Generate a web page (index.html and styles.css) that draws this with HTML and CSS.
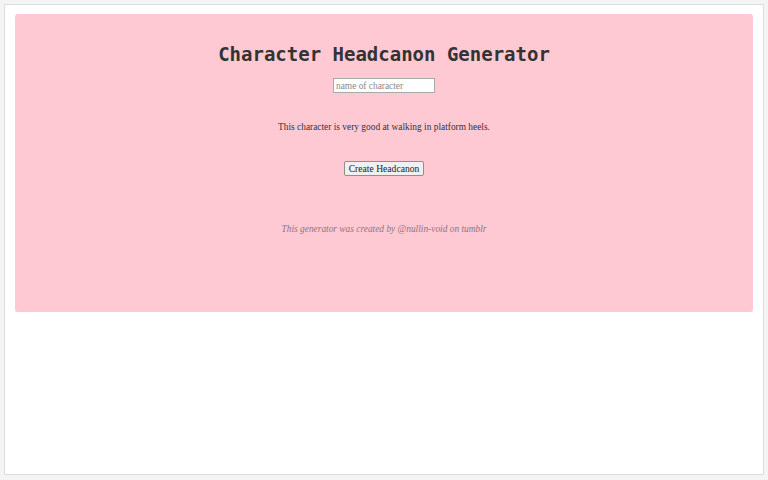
FILE: index.html
```html
<!DOCTYPE html>
<html lang="en">
  <head>
    <meta charset="UTF-8" />
    <meta name="viewport" content="width=device-width, initial-scale=1.0" />
    <title>Character Headcanon Generator</title>
    <link rel="stylesheet" href="styles.css">
  </head>
  <body>
    <main class="frame">
      <section class="generator">
        <h1 class="generator__title">Character Headcanon Generator</h1>
        <input class="generator__name" type="text" placeholder="name of character" />
        <p class="generator__result">This character is very good at walking in platform heels.</p>
        <button class="generator__button" type="button">Create Headcanon</button>
        <p class="generator__credit">This generator was created by @nullin-void on tumblr</p>
      </section>
    </main>
  </body>
</html>
```

FILE: styles.css
```css
:root {
  --pink: #ffc9d3;
  --ink: #333;
  --credit: #8c7583;
}
*,
*::before,
*::after {
  box-sizing: border-box;
}
body {
  margin: 0;
  padding: 4px 4px 5px;
  height: 100vh;
  background: #f4f4f4;
  font-family: "Liberation Serif", serif;
  color: var(--ink);
}
.frame {
  height: 100%;
  padding: 9px 10px;
  background: #fff;
  border: 1px solid #dcdcdc;
}

/* Pink generator card */
.generator {
  display: flex;
  flex-direction: column;
  align-items: center;
  height: 298px;
  padding-top: 28px;
  background: var(--pink);
  border-radius: 3px;
  font-size: 9.4px;
}
.generator__title {
  margin: 0;
  font-family: "DejaVu Sans Mono", monospace;
  font-size: 19px;
  line-height: 24px;
  color: var(--ink);
}
.generator__name {
  width: 102px;
  height: 15px;
  margin-top: 12px;
  padding: 0 2px;
  font: 9.4px "Liberation Serif", serif;
  border: 1px solid #a9a9a9;
  border-radius: 0;
  background: #fff;
}
.generator__name::placeholder {
  color: #8a8a8a;
}
.generator__result {
  margin: 28px 0 0;
  line-height: 12px;
}
.generator__button {
  width: 80px;
  height: 15px;
  margin-top: 28px;
  padding: 0;
  font: 9.6px "Liberation Serif", serif;
  color: #222;
  background: #f0f0f0;
  border: 1px solid #8f8f8f;
  border-radius: 2px;
}
.generator__credit {
  margin: 47px 0 0;
  line-height: 12px;
  font-style: italic;
  color: var(--credit);
}
```
